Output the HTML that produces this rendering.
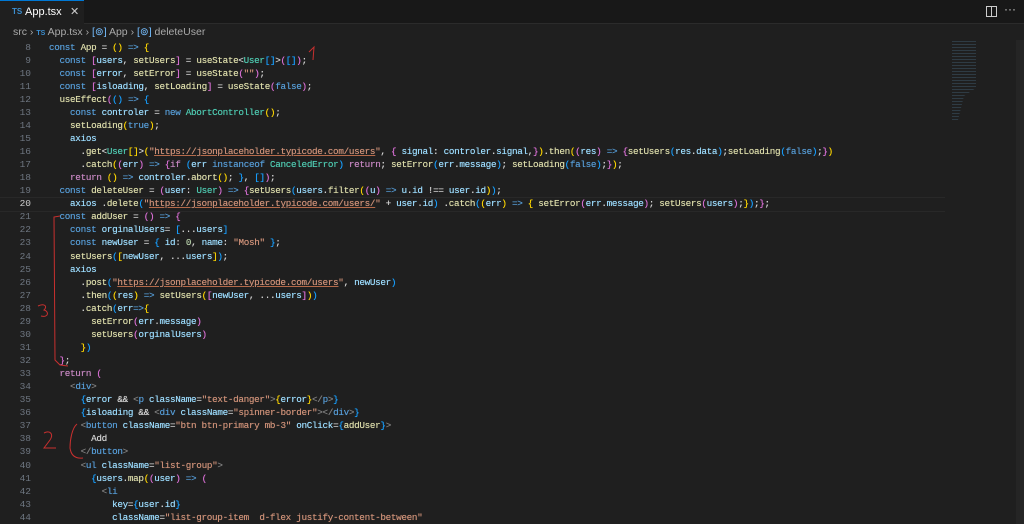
<!DOCTYPE html>
<html><head><meta charset="utf-8"><style>
body{margin:0;width:1024px;height:524px;background:#1f1f1f;overflow:hidden;font-family:"Liberation Sans",sans-serif;position:relative}
.tabs{position:absolute;left:0;top:0;width:1024px;height:23px;background:#181818;border-bottom:1px solid #2b2b2b}
.tab{position:absolute;left:0;top:0;width:84px;height:24px;background:#1f1f1f;border-top:1px solid #0078d4;color:#fff;font-size:11px}
.bc{position:absolute;left:13px;top:26px;font-size:10.5px;color:#a9a9a9;white-space:pre}
pre{position:absolute;margin:0;top:40.5px;font-family:"Liberation Mono",monospace;line-height:13.06px;color:#d4d4d4}
#ln{left:0;width:31px;text-align:right;color:#6e7681;font-size:9.5px}
#code{left:49px;font-size:9.3px;letter-spacing:-0.32px;text-shadow:0 0 0.4px currentColor}
.k{color:#569cd6}.v{color:#9cdcfe}.f{color:#dcdcaa}.s{color:#ce9178}.t{color:#4ec9b0}.c{color:#c586c0}.n{color:#b5cea8}.y{color:#ffd700}.p{color:#da70d6}.b{color:#179fff}.g{color:#808080}
.u{text-decoration:underline;text-decoration-color:#b56a4a}
.hl{position:absolute;left:0;top:196.7px;width:945px;height:13px;border-top:1px solid #282828;border-bottom:1px solid #282828}
</style></head><body>
<div class="tabs"><div class="tab"><span style="position:absolute;left:12px;top:6px;font-size:8px;color:#3b8ed0;font-weight:bold">TS</span><span style="position:absolute;left:25px;top:5px">App.tsx</span><span style="position:absolute;left:70px;top:4px;color:#ccc">✕</span></div>
<svg style="position:absolute;left:986px;top:6px" width="11" height="11"><rect x=".5" y=".5" width="10" height="10" fill="none" stroke="#ccc"/><line x1="5.5" y1="0" x2="5.5" y2="11" stroke="#ccc"/></svg>
<span style="position:absolute;left:1004px;top:2px;color:#ccc;font-size:12px">···</span></div>
<div class="bc">src <span>›</span> <span style="color:#3b8ed0;font-size:7px;font-weight:bold">TS</span> App.tsx › <span style="color:#75beff">[⊚]</span> App › <span style="color:#75beff">[⊚]</span> deleteUser</div>
<div class="hl"></div>
<pre id="ln">8
9
10
11
12
13
14
15
16
17
18
19
<span style="color:#ccc">20</span>
21
22
23
24
25
26
27
28
29
30
31
32
33
34
35
36
37
38
39
40
41
42
43
44</pre>
<pre id="code"><span class="k">const</span> <span class="f">App</span> = <span class="y">()</span> <span class="k">=&gt;</span> <span class="y">{</span>
  <span class="k">const</span> <span class="p">[</span><span class="v">users</span>, <span class="f">setUsers</span><span class="p">]</span> = <span class="f">useState</span>&lt;<span class="t">User</span><span class="b">[]</span>&gt;<span class="p">(</span><span class="b">[]</span><span class="p">)</span>;
  <span class="k">const</span> <span class="p">[</span><span class="v">error</span>, <span class="f">setError</span><span class="p">]</span> = <span class="f">useState</span><span class="p">(</span><span class="s">""</span><span class="p">)</span>;
  <span class="k">const</span> <span class="p">[</span><span class="v">isloading</span>, <span class="f">setLoading</span><span class="p">]</span> = <span class="f">useState</span><span class="p">(</span><span class="k">false</span><span class="p">)</span>;
  <span class="f">useEffect</span><span class="p">(</span><span class="b">()</span> <span class="k">=&gt;</span> <span class="b">{</span>
    <span class="k">const</span> <span class="v">controler</span> = <span class="k">new</span> <span class="t">AbortController</span><span class="y">()</span>;
    <span class="f">setLoading</span><span class="y">(</span><span class="k">true</span><span class="y">)</span>;
    <span class="v">axios</span>
      .<span class="f">get</span>&lt;<span class="t">User</span><span class="y">[]</span>&gt;<span class="y">(</span><span class="s">"<span class="u">https://jsonplaceholder.typicode.com/users</span>"</span>, <span class="p">{</span> <span class="v">signal</span>: <span class="v">controler</span>.<span class="v">signal</span>,<span class="p">}</span><span class="y">)</span>.<span class="f">then</span><span class="y">(</span><span class="p">(</span><span class="v">res</span><span class="p">)</span> <span class="k">=&gt;</span> <span class="p">{</span><span class="f">setUsers</span><span class="b">(</span><span class="v">res</span>.<span class="v">data</span><span class="b">)</span>;<span class="f">setLoading</span><span class="b">(</span><span class="k">false</span><span class="b">)</span>;<span class="p">}</span><span class="y">)</span>
      .<span class="f">catch</span><span class="y">(</span><span class="p">(</span><span class="v">err</span><span class="p">)</span> <span class="k">=&gt;</span> <span class="p">{</span><span class="c">if</span> <span class="b">(</span><span class="v">err</span> <span class="k">instanceof</span> <span class="t">CanceledError</span><span class="b">)</span> <span class="c">return</span>; <span class="f">setError</span><span class="b">(</span><span class="v">err</span>.<span class="v">message</span><span class="b">)</span>; <span class="f">setLoading</span><span class="b">(</span><span class="k">false</span><span class="b">)</span>;<span class="p">}</span><span class="y">)</span>;
    <span class="c">return</span> <span class="y">()</span> <span class="k">=&gt;</span> <span class="v">controler</span>.<span class="f">abort</span><span class="y">()</span>; <span class="b">}</span>, <span class="b">[]</span><span class="p">)</span>;
  <span class="k">const</span> <span class="f">deleteUser</span> = <span class="p">(</span><span class="v">user</span>: <span class="t">User</span><span class="p">)</span> <span class="k">=&gt;</span> <span class="p">{</span><span class="f">setUsers</span><span class="b">(</span><span class="v">users</span>.<span class="f">filter</span><span class="y">(</span><span class="p">(</span><span class="v">u</span><span class="p">)</span> <span class="k">=&gt;</span> <span class="v">u</span>.<span class="v">id</span> !== <span class="v">user</span>.<span class="v">id</span><span class="y">)</span><span class="b">)</span>;
    <span class="v">axios</span> .<span class="f">delete</span><span class="b">(</span><span class="s">"<span class="u">https://jsonplaceholder.typicode.com/users/</span>"</span> + <span class="v">user</span>.<span class="v">id</span><span class="b">)</span> .<span class="f">catch</span><span class="b">(</span><span class="y">(</span><span class="v">err</span><span class="y">)</span> <span class="k">=&gt;</span> <span class="y">{</span> <span class="f">setError</span><span class="p">(</span><span class="v">err</span>.<span class="v">message</span><span class="p">)</span>; <span class="f">setUsers</span><span class="p">(</span><span class="v">users</span><span class="p">)</span>;<span class="y">}</span><span class="b">)</span>;<span class="p">}</span>;
  <span class="k">const</span> <span class="f">addUser</span> = <span class="p">()</span> <span class="k">=&gt;</span> <span class="p">{</span>
    <span class="k">const</span> <span class="v">orginalUsers</span>= <span class="b">[</span>...<span class="v">users</span><span class="b">]</span>
    <span class="k">const</span> <span class="v">newUser</span> = <span class="b">{</span> <span class="v">id</span>: <span class="n">0</span>, <span class="v">name</span>: <span class="s">"Mosh"</span> <span class="b">}</span>;
    <span class="f">setUsers</span><span class="b">(</span><span class="y">[</span><span class="v">newUser</span>, ...<span class="v">users</span><span class="y">]</span><span class="b">)</span>;
    <span class="v">axios</span>
      .<span class="f">post</span><span class="b">(</span><span class="s">"<span class="u">https://jsonplaceholder.typicode.com/users</span>"</span>, <span class="v">newUser</span><span class="b">)</span>
      .<span class="f">then</span><span class="b">(</span><span class="y">(</span><span class="v">res</span><span class="y">)</span> <span class="k">=&gt;</span> <span class="f">setUsers</span><span class="y">(</span><span class="p">[</span><span class="v">newUser</span>, ...<span class="v">users</span><span class="p">]</span><span class="y">)</span><span class="b">)</span>
      .<span class="f">catch</span><span class="b">(</span><span class="v">err</span><span class="k">=&gt;</span><span class="y">{</span>
        <span class="f">setError</span><span class="p">(</span><span class="v">err</span>.<span class="v">message</span><span class="p">)</span>
        <span class="f">setUsers</span><span class="p">(</span><span class="v">orginalUsers</span><span class="p">)</span>
      <span class="y">}</span><span class="b">)</span>
  <span class="p">}</span>;
  <span class="c">return</span> <span class="p">(</span>
    <span class="g">&lt;</span><span class="k">div</span><span class="g">&gt;</span>
      <span class="b">{</span><span class="v">error</span> &amp;&amp; <span class="g">&lt;</span><span class="k">p</span> <span class="v">className</span>=<span class="s">"text-danger"</span><span class="g">&gt;</span><span class="y">{</span><span class="v">error</span><span class="y">}</span><span class="g">&lt;/</span><span class="k">p</span><span class="g">&gt;</span><span class="b">}</span>
      <span class="b">{</span><span class="v">isloading</span> &amp;&amp; <span class="g">&lt;</span><span class="k">div</span> <span class="v">className</span>=<span class="s">"spinner-border"</span><span class="g">&gt;&lt;/</span><span class="k">div</span><span class="g">&gt;</span><span class="b">}</span>
      <span class="g">&lt;</span><span class="k">button</span> <span class="v">className</span>=<span class="s">"btn btn-primary mb-3"</span> <span class="v">onClick</span>=<span class="b">{</span><span class="f">addUser</span><span class="b">}</span><span class="g">&gt;</span>
        Add
      <span class="g">&lt;/</span><span class="k">button</span><span class="g">&gt;</span>
      <span class="g">&lt;</span><span class="k">ul</span> <span class="v">className</span>=<span class="s">"list-group"</span><span class="g">&gt;</span>
        <span class="b">{</span><span class="v">users</span>.<span class="f">map</span><span class="y">(</span><span class="p">(</span><span class="v">user</span><span class="p">)</span> <span class="k">=&gt;</span> <span class="p">(</span>
          <span class="g">&lt;</span><span class="k">li</span>
            <span class="v">key</span>=<span class="b">{</span><span class="v">user</span>.<span class="v">id</span><span class="b">}</span>
            <span class="v">className</span>=<span class="s">"list-group-item  d-flex justify-content-between"</span></pre>
<svg style="position:absolute;left:0;top:0" width="1024" height="524" fill="none" stroke="#c8302f" stroke-width="1">
<path d="M309 52 C311 50 313 48 314 47 L313 60"/>
<path d="M60 216 L54 217 L55 360 L60 365 L68 366"/>
<path d="M38 306 C44 303 48 306 44 310 C49 311 49 318 41 316"/>
<path d="M77 424 C72 428 70 440 70 448 C71 455 75 459 83 458"/>
<path d="M44 433 C50 430 54 434 50 440 L44 448 L56 448"/>
</svg>
<div style="position:absolute;left:952px;top:40px;width:60px;height:80px;opacity:.35;background:repeating-linear-gradient(#1f1f1f 0 1px,#4a6f8a 1px 2px,#1f1f1f 2px 3px);clip-path:polygon(0 0,40% 0,40% 60%,20% 70%,10% 100%,0 100%)"></div>
<div style="position:absolute;left:1016px;top:40px;width:8px;height:484px;background:#252525"></div>
</body></html>
